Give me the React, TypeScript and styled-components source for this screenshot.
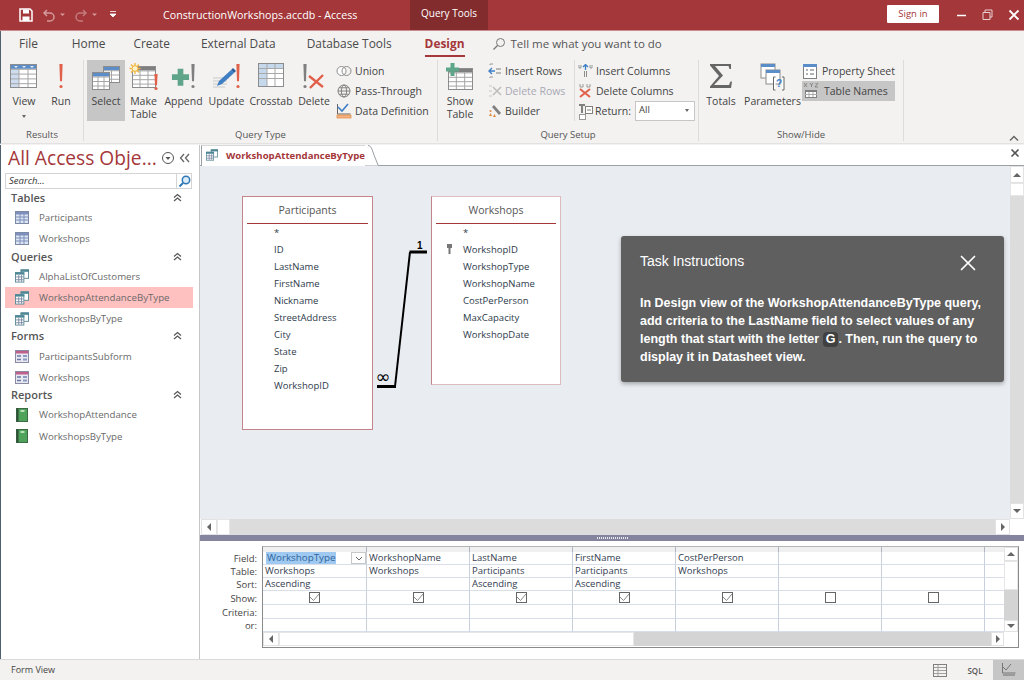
import React from "react";
import styled, { createGlobalStyle } from "styled-components";
import { X } from "lucide-react";

const GlobalStyle = createGlobalStyle`
  html, body {
    margin: 0;
    height: 100%;
    overflow: hidden;
    background: #f3f2f1;
  }
  #root { height: 100%; }
  * { box-sizing: border-box; }
`;

const Window = styled.div`
  width: 1024px;
  height: 680px;
  display: flex;
  flex-direction: column;
  font-family: "Open Sans", "Noto Sans", sans-serif;
  color: #444;
  overflow: hidden;
  background: #f3f2f1;
`;

/* title bar */
const TitleBar = styled.div`
  height: 31px;
  flex: none;
  background: #a4373a;
  border-bottom: 1px solid #c98d8f;
  display: flex;
  align-items: flex-start;
  color: #fff;
`;

const QuickAccess = styled.div`
  width: 163px;
  height: 30px;
  padding: 8px 0 0 19px;
  display: flex;
  align-items: flex-start;
`;

const QuickSlot = styled.span<{ $w: number }>`
  width: ${(p) => p.$w}px;
  flex: none;
  display: block;
  line-height: 0;
`;

const FileName = styled.div`
  width: 247px;
  font-size: 10.7px;
  line-height: 31px;
  white-space: nowrap;
`;

const ToolsTab = styled.div`
  width: 78px;
  height: 30px;
  background: #832c2e;
  font-size: 10px;
  line-height: 27px;
  text-align: center;
`;

const SignIn = styled.div`
  margin: 5px 0 0 399px;
  width: 52px;
  height: 18px;
  background: #fff;
  color: #a4373a;
  font-size: 9.5px;
  line-height: 18px;
  text-align: center;
  border-radius: 1px;
`;

const WindowButtons = styled.div`
  margin-left: 17px;
  padding-top: 9px;
  display: flex;
  gap: 15px;
  line-height: 0;
`;

/* ribbon tabs */
const TabRow = styled.div`
  height: 29px;
  flex: none;
  display: flex;
  align-items: flex-start;
  padding: 3px 0 0 18px;
  border-left: 1px solid #51606f;
`;

const RibbonTab = styled.div<{ $left: number; $active?: boolean }>`
  margin-left: ${(p) => p.$left}px;
  font-size: 11.9px;
  line-height: 19px;
  height: 23px;
  white-space: nowrap;
  color: ${(p) => (p.$active ? "#a4373a" : "#4a4a4a")};
  font-weight: ${(p) => (p.$active ? 700 : 400)};
  border-bottom: ${(p) => (p.$active ? "2px solid #a4373a" : "none")};
`;

const TellMe = styled.div`
  margin-left: 27px;
  display: flex;
  align-items: center;
  gap: 5px;
  font-size: 11.5px;
  line-height: 19px;
  color: #555;
`;

/* ribbon */
const Ribbon = styled.div`
  height: 84px;
  flex: none;
  display: flex;
  position: relative;
  border-left: 1px solid #51606f;
  border-bottom: 1px solid #e2e2e2;
`;

const Group = styled.div<{ $w: number }>`
  width: ${(p) => p.$w}px;
  flex: none;
  height: 81px;
  border-right: 1px solid #dedcdb;
  display: flex;
  flex-direction: column;
`;

const GroupBody = styled.div<{ $pad?: number }>`
  height: 69px;
  display: flex;
  align-items: flex-start;
  padding-left: ${(p) => p.$pad ?? 0}px;
`;

const GroupLabel = styled.div`
  text-align: center;
  font-size: 9.5px;
  line-height: 13px;
  color: #555;
`;

const LargeButton = styled.div<{ $w: number; $on?: boolean }>`
  width: ${(p) => p.$w}px;
  height: 61px;
  flex: none;
  display: flex;
  flex-direction: column;
  align-items: center;
  background: ${(p) => (p.$on ? "#c6c6c6" : "transparent")};
  font-size: 10.5px;
  line-height: 13px;
  text-align: center;
  color: #444;
`;

const IconSlot = styled.div`
  height: 34.5px;
  padding-top: 3px;
  line-height: 0;
  flex: none;
`;

const Caret = styled.span`
  display: block;
  width: 0;
  height: 0;
  margin-top: 7px;
  border-left: 2.5px solid transparent;
  border-right: 2.5px solid transparent;
  border-top: 3px solid #666;
`;

const SmallColumn = styled.div<{ $left?: number; $w?: number; $rule?: boolean }>`
  margin-left: ${(p) => p.$left ?? 0}px;
  width: ${(p) => (p.$w ? `${p.$w}px` : "auto")};
  flex: none;
  padding-top: 1px;
  padding-left: ${(p) => (p.$rule ? 2 : 0)}px;
  border-left: ${(p) => (p.$rule ? "1px solid #dedcdb" : "none")};
  height: 61px;
  display: flex;
  flex-direction: column;
`;

const SmallButton = styled.div<{ $off?: boolean; $on?: boolean; $gap?: number }>`
  height: 20px;
  display: flex;
  align-items: center;
  gap: ${(p) => p.$gap ?? 3}px;
  padding-left: 1px;
  font-size: 10.5px;
  white-space: nowrap;
  color: ${(p) => (p.$off ? "#a9a9b4" : "#444")};
  background: ${(p) => (p.$on ? "#c6c6c6" : "transparent")};
  svg { flex: none; }
`;

const ReturnBox = styled.div`
  width: 60px;
  height: 20px;
  margin-left: 2px;
  background: #fff;
  border: 1px solid #c6c6c6;
  font-size: 9.5px;
  line-height: 15px;
  padding-left: 3px;
  display: flex;
  justify-content: space-between;
  span { margin: 7px 5px 0 0; border-left: 2.5px solid transparent; border-right: 2.5px solid transparent; border-top: 3px solid #666; height: 0; }
`;

const CollapseRibbon = styled.div`
  position: absolute;
  right: 5px;
  bottom: 1px;
  line-height: 0;
`;

/* main */
const Body = styled.div`
  flex: 1;
  min-height: 0;
  display: flex;
  margin-top: 1px;
  border-left: 1px solid #51606f;
`;

const NavPane = styled.div`
  width: 199px;
  flex: none;
  background: #fff;
  border-right: 1px solid #c6c6c6;
  padding: 1px 0 0 3px;
`;

const NavHeader = styled.div`
  height: 26px;
  display: flex;
  align-items: center;
  padding: 0 0 3px 4px;
  color: #a4373a;
  font-size: 19.2px;
  white-space: nowrap;
  svg { flex: none; }
`;

const NavTitle = styled.span`
  width: 153px;
`;

const NavCollapse = styled.svg`
  margin-left: 4px;
`;

const SearchBox = styled.div`
  margin: 1px 0 2px 1px;
  width: 187px;
  height: 16px;
  border: 1px solid #d4d4d4;
  display: flex;
  justify-content: space-between;
  font-size: 9.5px;
  font-style: italic;
  line-height: 13px;
  padding-left: 3px;
  color: #333;
`;

const SearchButton = styled.span`
  width: 15px;
  border-left: 1px solid #d4d4d4;
  line-height: 0;
  padding: 1px 0 0 1px;
`;

const NavHead = styled.div`
  height: 15px;
  margin-bottom: 1px;
  padding: 0 10px 2px 7px;
  width: 188px;
  display: flex;
  justify-content: space-between;
  align-items: center;
  font-size: 11px;
  font-weight: 600;
  color: #555;
`;

const NavItem = styled.div<{ $on?: boolean }>`
  height: 21.3px;
  width: 188px;
  margin-left: 1px;
  display: flex;
  align-items: center;
  gap: 10px;
  padding-left: 10px;
  font-size: 9.7px;
  color: #6a6a6a;
  background: ${(p) => (p.$on ? "#ffc0c0" : "transparent")};
  white-space: nowrap;
  svg { width: 14px; flex: none; }
`;

const Workspace = styled.div`
  flex: 1;
  min-width: 0;
  display: flex;
  flex-direction: column;
  background: #fff;
`;

const DocTabs = styled.div`
  height: 21px;
  flex: none;
  position: relative;
  display: flex;
  align-items: flex-end;
  padding-left: 1px;
  border-bottom: 1px solid #9aa0a6;
`;

const DocTab = styled.div`
  height: 21px;
  width: 164px;
  margin-bottom: -1px;
  background: #fff;
  border-left: 1px solid #9aa0a6;
  border-top: 1px solid #d8d8d8;
  display: flex;
  align-items: center;
  gap: 8px;
  padding: 0 0 2px 4px;
  color: #a4373a;
  font-size: 9.6px;
  font-weight: 700;
  white-space: nowrap;
`;

const DocTabEdge = styled.svg`
  display: block;
  margin-bottom: -1px;
`;

const CloseDoc = styled.div`
  position: absolute;
  right: 4px;
  top: 3px;
  line-height: 0;
`;

const DesignRow = styled.div`
  height: 353px;
  flex: none;
  display: flex;
`;

const Canvas = styled.div`
  width: 810px;
  flex: none;
  position: relative;
  background: #e9edf1;
`;

const TableNode = styled.div<{ $x: number; $w: number; $h: number; $soft?: boolean }>`
  position: absolute;
  left: ${(p) => p.$x}px;
  top: 30px;
  width: ${(p) => p.$w}px;
  height: ${(p) => p.$h}px;
  background: #fff;
  border: 1px solid ${(p) => (p.$soft ? "#dcbcbe" : "#c4858a")};
  border-left-color: #c4858a;
  padding: 0 4px;
`;

const NodeTitle = styled.div`
  height: 27px;
  border-bottom: 1px solid #a4373a;
  text-align: center;
  font-size: 10.5px;
  line-height: 26px;
  color: #555;
`;

const NodeField = styled.div`
  height: 17px;
  position: relative;
  padding-left: 27px;
  font-size: 9.5px;
  line-height: 17px;
  color: #2d3a4a;
  white-space: nowrap;
`;

const KeyMark = styled.svg`
  position: absolute;
  left: 11px;
  top: 3px;
`;

const Relation = styled.svg`
  position: absolute;
  left: 0;
  top: 0;
  pointer-events: none;
`;

const TaskCard = styled.div`
  position: absolute;
  left: 421px;
  top: 70px;
  width: 383px;
  height: 146px;
  background: #5f5f5f;
  border-radius: 3px;
  box-shadow: 0 2px 4px rgba(0, 0, 0, 0.3);
  padding: 16px 18px 0 19px;
  color: #fff;
  font-family: "Liberation Sans", Arial, sans-serif;
`;

const TaskHead = styled.div`
  display: flex;
  justify-content: space-between;
  align-items: flex-start;
  height: 42px;
  font-size: 14px;
  line-height: 18px;
`;

const TaskClose = styled.span`
  line-height: 0;
  margin: -2px 5px 0 0;
`;

const TaskText = styled.div`
  font-size: 12.5px;
  font-weight: 700;
  line-height: 18px;
`;

const LetterKey = styled.span`
  display: inline-block;
  background: #404040;
  border-radius: 4px;
  padding: 0 3px;
  line-height: 15px;
`;

const VScroll = styled.div`
  width: 14px;
  flex: none;
  display: flex;
  flex-direction: column;
  background: #dcdcdc;
`;

const ScrollBtn = styled.div<{ $w?: number; $h?: number }>`
  width: ${(p) => (p.$w ? `${p.$w}px` : "auto")};
  height: ${(p) => (p.$h ? `${p.$h}px` : "auto")};
  flex: none;
  background: #fff;
  border: 1px solid #e2e2e2;
  display: flex;
  align-items: center;
  justify-content: center;
`;

const Thumb = styled.div<{ $w?: number; $h?: number }>`
  width: ${(p) => (p.$w ? `${p.$w}px` : "auto")};
  height: ${(p) => (p.$h ? `${p.$h}px` : "auto")};
  flex: none;
  background: #fff;
  border: 1px solid #e6e6e6;
`;

const Track = styled.div`
  flex: 1;
`;

const HScrollRow = styled.div`
  height: 16px;
  flex: none;
  display: flex;
  padding-left: 1px;
`;

const HScroll = styled.div`
  width: 809px;
  flex: none;
  display: flex;
  background: #dcdcdc;
`;

const Arrow = styled.span<{ $dir: "up" | "down" | "left" | "right" }>`
  width: 0;
  height: 0;
  border-style: solid;
  border-color: transparent;
  ${(p) =>
    p.$dir === "up"
      ? "border-width: 0 4px 4px; border-bottom-color: #666;"
      : p.$dir === "down"
      ? "border-width: 4px 4px 0; border-top-color: #666;"
      : p.$dir === "left"
      ? "border-width: 4px 4px 4px 0; border-right-color: #666;"
      : "border-width: 4px 0 4px 4px; border-left-color: #666;"}
`;

const Splitter = styled.div`
  height: 6px;
  flex: none;
  background: #85849f;
  display: flex;
  justify-content: center;
  padding: 2px 0 0 0;
`;

const SplitDots = styled.div`
  width: 32px;
  height: 2px;
  margin-left: 1px;
  background: repeating-linear-gradient(90deg, #e8e8f0 0 1px, transparent 1px 2px);
`;

const DesignGrid = styled.div`
  flex: 1;
  display: flex;
  align-items: flex-start;
  padding-top: 5px;
`;

const RowLabels = styled.div`
  width: 62px;
  flex: none;
  padding: 6px 5px 0 0;
  text-align: right;
  font-size: 9.5px;
  color: #444;
`;

const RowLabel = styled.div<{ $h: number }>`
  height: ${(p) => p.$h}px;
  line-height: 13px;
`;

const GridFrame = styled.div`
  width: 757px;
  height: 102px;
  flex: none;
  border: 1px solid #8a8a8a;
  border-top-color: #b4b4b4;
  display: flex;
`;

const GridMain = styled.div`
  width: 741px;
  flex: none;
  display: flex;
  flex-direction: column;
`;

const columnTracks = "104px repeat(6, 103px) 1fr";

const GridStrip = styled.div`
  height: 5px;
  background: #f0f0f0;
  display: grid;
  grid-template-columns: ${columnTracks};
`;

const StripCell = styled.div`
  border-right: 1px solid #b0b6c0;
  &:last-child { border-right: none; }
`;

const GridRow = styled.div<{ $h: number }>`
  height: ${(p) => p.$h}px;
  display: grid;
  grid-template-columns: ${columnTracks};
`;

const Cell = styled.div`
  border-right: 1px solid #c8d0dc;
  border-bottom: 1px solid #d8deea;
  font-size: 9.5px;
  line-height: 12px;
  padding: 0 0 1px 2px;
  color: #33404f;
  white-space: nowrap;
  overflow: hidden;
  display: flex;
  align-items: center;
  &:last-child { border-right: none; }
`;

const FieldCell = styled(Cell)`
  justify-content: space-between;
  padding: 0 0 0 3px;
  align-items: stretch;
`;

const Selected = styled.span`
  display: flex;
  align-items: center;
  background: #9fc9f0;
  color: #2f649e;
  font-size: 9.8px;
  padding: 0 1px;
`;

const FieldDrop = styled.span`
  width: 15px;
  border: 1px solid #c8c8c8;
  line-height: 0;
  display: flex;
  align-items: center;
  justify-content: center;
`;

const CheckCell = styled(Cell)`
  justify-content: center;
  padding: 0;
  line-height: 0;
`;

const Tick = styled.span`
  width: 11px;
  height: 11px;
  border: 1px solid #666;
  display: block;
  background: #fff;
`;

const GridHScroll = styled.div`
  height: 14px;
  display: flex;
  background: #d4d4d4;
`;

const GridVScroll = styled.div`
  width: 14px;
  flex: none;
  display: flex;
  flex-direction: column;
  background: #fff;
`;

const GridVTrack = styled.div`
  height: 85px;
  display: flex;
  flex-direction: column;
  background: #d4d4d4;
`;

const StatusBar = styled.div`
  height: 21px;
  flex: none;
  background: #f3f2f1;
  border-top: 1px solid #d9d9d9;
  display: flex;
  align-items: center;
  padding: 0 0 1px 11px;
  font-size: 9px;
  color: #444;
`;

const StatusViews = styled.div`
  margin: 0 0 -1px auto;
  display: flex;
  align-items: stretch;
  height: 20px;
`;

const ViewButton = styled.div<{ $w: number; $on?: boolean }>`
  width: ${(p) => p.$w}px;
  display: flex;
  align-items: center;
  justify-content: center;
  background: ${(p) => (p.$on ? "#c6c6c6" : "transparent")};
  font-size: 8px;
  font-weight: 600;
  color: #555;
`;

/* drawings */
const Sheet = ({ x, y, w, h, cols, rows, head = "#5b8dc8", side }: { x: number; y: number; w: number; h: number; cols: number; rows: number; head?: string; side?: string }) => {
  const hh = h / (rows + 1);
  const cw = w / cols;
  return (
    <g>
      <rect x={x} y={y} width={w} height={h} fill="#fff" />
      {side && <rect x={x} y={y} width={cw} height={h} fill={side} />}
      <rect x={x} y={y} width={w} height={hh} fill={head} />
      {Array.from({ length: rows }, (_, i) => (
        <line key={`r${i}`} x1={x} x2={x + w} y1={y + hh * (i + 1) + 0.5} y2={y + hh * (i + 1) + 0.5} stroke="#a6a6a6" />
      ))}
      {Array.from({ length: cols - 1 }, (_, i) => (
        <line key={`c${i}`} y1={y + hh} y2={y + h} x1={x + cw * (i + 1)} x2={x + cw * (i + 1)} stroke="#a6a6a6" />
      ))}
      <rect x={x + 0.5} y={y + 0.5} width={w - 1} height={h - 1} fill="none" stroke="#8c8c8c" />
    </g>
  );
};

const Bang = ({ x, y, h, color }: { x: number; y: number; h: number; color: string }) => (
  <g fill={color}>
    <path d={`M${x - 1.6} ${y}h3.2l-.6 ${h * 0.72}h-2z`} />
    <circle cx={x} cy={y + h - 1.5} r={1.6} />
  </g>
);

const ViewIcon = () => (
  <svg width="30" height="27" viewBox="0 0 30 27">
    <Sheet x={1} y={1} w={27} h={24} cols={3} rows={4} side="#cddcee" />
    <path d="M5 3h4l-2 2zM13 3h4l-2 2zM21 3h4l-2 2z" fill="#dfe9f5" />
  </svg>
);
const RunIcon = () => (
  <svg width="12" height="27" viewBox="0 0 12 27">
    <Bang x={6} y={1} h={24} color="#e0604a" />
  </svg>
);
const SelectIcon = () => (
  <svg width="30" height="28" viewBox="0 0 30 28">
    <Sheet x={12} y={3} w={17} h={17} cols={2} rows={3} />
    <Sheet x={1} y={9} w={18} h={18} cols={3} rows={3} />
  </svg>
);
const MakeTableIcon = () => (
  <svg width="30" height="28" viewBox="0 0 30 28">
    <Sheet x={3} y={3} w={24} h={22} cols={3} rows={4} head="#7f7f7f" />
    <g stroke="#f0b840" strokeWidth="1.4">
      <path d="M6 0v11M0.5 5.5h11M2 1.5l8 8M10 1.5l-8 8" />
    </g>
    <circle cx={6} cy={5.5} r={2.8} fill="#fff3cf" stroke="#f0b840" />
    <Bang x={27} y={11} h={16} color="#e0604a" />
  </svg>
);
const AppendIcon = () => (
  <svg width="26" height="27" viewBox="0 0 26 27">
    <path d="M7 7h6v6h6v6h-6v6H7v-6H1v-6h6z" transform="translate(0 -1) scale(.95)" fill="#5fa58a" />
    <Bang x={22} y={1} h={24} color="#7f7f7f" />
  </svg>
);
const UpdateIcon = () => (
  <svg width="30" height="28" viewBox="0 0 30 28">
    <path d="M1 15h16M1 18h14M1 21h14M1 24h12" stroke="#c9c9c9" />
    <path d="M5 23l2-5L19 7l3 3-12 11z" fill="#3f7fc4" />
    <path d="M19 7l2-2 3 3-2 2z" fill="#2a5f9e" />
    <Bang x={26} y={1} h={24} color="#e0604a" />
  </svg>
);
const CrosstabIcon = () => (
  <svg width="26" height="24" viewBox="0 0 26 24">
    <rect x={1} y={1} width={24} height={22} fill="#fff" />
    <rect x={1} y={1} width={24} height={4} fill="#c5d8ec" />
    <rect x={1} y={1} width={8} height={22} fill="#c5d8ec" />
    <path d="M1 5.5h24M1 10.5h24M1 15.5h24M9 1v22M17 1v22" stroke="#a8a8a8" />
    <rect x={0.5} y={0.5} width={25} height={23} fill="none" stroke="#8c8c8c" />
  </svg>
);
const DeleteIcon = () => (
  <svg width="28" height="28" viewBox="0 0 28 28">
    <Bang x={5} y={1} h={24} color="#7f7f7f" />
    <path d="M9 13l14 11M23 12L10 25" stroke="#e0604a" strokeWidth="2.4" />
  </svg>
);
const UnionIcon = () => (
  <svg width="16" height="12" viewBox="0 0 16 12">
    <circle cx={5.5} cy={6} r={4.5} fill="#fff" stroke="#8c8c8c" />
    <circle cx={10.5} cy={6} r={4.5} fill="none" stroke="#8c8c8c" />
  </svg>
);
const GlobeIcon = () => (
  <svg width="16" height="14" viewBox="0 0 16 14">
    <g fill="none" stroke="#808080">
      <circle cx={8} cy={7} r={6} />
      <ellipse cx={8} cy={7} rx={2.6} ry={6} />
      <path d="M2 7h12M3 3.8h10M3 10.2h10" />
    </g>
  </svg>
);
const DefinitionIcon = () => (
  <svg width="16" height="16" viewBox="0 0 16 16">
    <path d="M1.5 1v10h13" fill="none" stroke="#666" />
    <path d="M2 4l4 4 6-7" fill="none" stroke="#3f7fc4" strokeWidth="1.6" />
    <rect x={1} y={12} width={14} height={3} fill="#f4b183" stroke="#e08a3c" strokeWidth=".7" />
  </svg>
);
const ShowTableIcon = () => (
  <svg width="28" height="28" viewBox="0 0 28 28">
    <Sheet x={2} y={5} w={25} h={22} cols={3} rows={4} head="#7f7f7f" />
    <path d="M4.5 0h4v4.5H13v4H8.5V13h-4V8.5H0v-4h4.5z" fill="#5fa58a" />
  </svg>
);
const InsertRowsIcon = () => (
  <svg width="14" height="16" viewBox="0 0 14 16">
    <path d="M5 1H2v1M5 14H2v1" stroke="#999" fill="none" />
    <path d="M7 8H1M4 5L1 8l3 3" stroke="#3f7fc4" fill="none" strokeWidth="1.4" />
    <path d="M8 6h5M8 10h5" stroke="#7f7f7f" />
  </svg>
);
const DeleteRowsIcon = () => (
  <svg width="14" height="14" viewBox="0 0 14 14">
    <path d="M1 2h3M1 7h3M1 12h3" stroke="#c8c8c8" />
    <path d="M5 3l8 8M13 3l-8 8" stroke="#bdbdbd" strokeWidth="1.6" />
  </svg>
);
const BuilderIcon = () => (
  <svg width="14" height="14" viewBox="0 0 14 14">
    <path d="M6 1l7 8-2 2L4 3z" fill="#808080" />
    <path d="M1 12l1.5-3L4 12zM5 13l1.5-3L8 13z" fill="#e08a3c" />
    <circle cx={2.5} cy={7} r={1} fill="#e08a3c" />
  </svg>
);
const InsertColumnsIcon = () => (
  <svg width="15" height="14" viewBox="0 0 15 14">
    <path d="M1 1v3h2V1M12 1v3h2V1" stroke="#999" fill="none" />
    <path d="M7.500 6V1M5 3l2.500-2.500L10 3" stroke="#3f7fc4" fill="none" strokeWidth="1.3" />
    <path d="M6 7h1v6H6zM8 7h1v6H8z" fill="#8c8c8c" />
  </svg>
);
const DeleteColumnsIcon = () => (
  <svg width="14" height="14" viewBox="0 0 14 14">
    <path d="M2 0v3h3V0M9 0v3h3V0" stroke="#999" fill="none" />
    <path d="M2 5l10 8M12 5L2 13" stroke="#e0604a" strokeWidth="2" />
  </svg>
);
const ReturnIcon = () => (
  <svg width="15" height="17" viewBox="0 0 15 17">
    <path d="M1 1h6v2H5v7H3V3H1z" fill="#808080" />
    <rect x={7.500} y={3.500} width={7} height={7} fill="#fff" stroke="#808080" />
    <path d="M9 7h4" stroke="#808080" />
    <rect x={1.500} y={11.500} width={6} height={5} fill="#fff" stroke="#999" />
  </svg>
);
const TotalsIcon = () => (
  <svg width="24" height="26" viewBox="0 0 24 26">
    <path d="M1 1h21v5h-1.500l-1-3H6l8 9.500L5 22h15l1.500-3.500H23L22 25H1v-1.500L10 13 1 2.500z" fill="#666" />
  </svg>
);
const ParametersIcon = () => (
  <svg width="26" height="28" viewBox="0 0 26 28">
    <rect x={1} y={1} width={14} height={14} fill="#fff" stroke="#8c8c8c" />
    <rect x={1} y={1} width={14} height={3} fill="#5b8dc8" />
    <rect x={6} y={7} width={14} height={14} fill="#fff" stroke="#8c8c8c" />
    <rect x={6} y={7} width={14} height={3} fill="#5b8dc8" />
    <path d="M15.500 14h-2v13h2M22 14h2v13h-2" fill="#fff" stroke="#666" />
    <text x={16} y={24} fontFamily="Liberation Sans, sans-serif" fontSize="10" fontWeight="700" fill="#3f7fc4">?</text>
  </svg>
);
const PropertyIcon = () => (
  <svg width="14" height="15" viewBox="0 0 14 15">
    <rect x={0.500} y={0.500} width={13} height={14} fill="#fff" stroke="#808080" />
    <rect x={0} y={0} width={14} height={3} fill="#5b8dc8" />
    <path d="M3 6h2M3 10h2M7 6h4M7 10h4" stroke="#666" />
  </svg>
);
const TableNamesIcon = () => (
  <svg width="16" height="16" viewBox="0 0 16 16">
    <path d="M1 0l3 4M4 0L1 4M7 0l1.500 2L10 0M8.500 2v2M12 0h3l-3 4h3" stroke="#777" fill="none" strokeWidth=".8" />
    <rect x={2.500} y={7.500} width={11} height={7} fill="#fff" stroke="#808080" />
    <rect x={2} y={7} width={12} height={2} fill="#808080" />
    <path d="M6 9v5M10 9v5M2 11.500h12" stroke="#aaa" />
  </svg>
);
const TableGlyph = () => (
  <svg width="14" height="13" viewBox="0 0 14 13">
    <rect x={0.500} y={0.500} width={13} height={12} fill="#dde4f2" stroke="#7d8aa5" />
    <rect x={1} y={1} width={12} height={2.500} fill="#7d90bd" />
    <path d="M1 6h12M1 9h12M5 3v9M9 3v9" stroke="#7d90bd" />
  </svg>
);
const QueryGlyph = () => (
  <svg width="14" height="14" viewBox="0 0 15 14">
    <rect x={6.500} y={0.500} width={8} height={9} fill="#fff" stroke="#5d8a94" />
    <rect x={6} y={0} width={9} height={2.500} fill="#4d8694" />
    <rect x={0.500} y={3.500} width={9} height={10} fill="#fff" stroke="#5d8a94" />
    <rect x={0} y={3} width={10} height={2.500} fill="#4d8694" />
    <path d="M1 8h8M1 11h8M4 6v7M7 6v7" stroke="#7d8aa5" />
  </svg>
);
const FormGlyph = () => (
  <svg width="14" height="13" viewBox="0 0 14 13">
    <rect x={0.500} y={0.500} width={13} height={12} fill="#e8e8f2" stroke="#8a8aa5" />
    <rect x={1} y={1} width={12} height={2.500} fill="#c0608a" />
    <path d="M2 6h4M2 9.500h4" stroke="#6a7aa0" strokeWidth="1.500" />
    <rect x={8} y={5} width={4} height={2} fill="#8a9ac0" />
    <rect x={8} y={8.500} width={4} height={2} fill="#8a9ac0" />
  </svg>
);
const ReportGlyph = () => (
  <svg width="14" height="14" viewBox="0 0 13 14">
    <rect x={1} y={0.500} width={11} height={13} fill="#4ea25a" stroke="#3c6a44" />
    <rect x={1} y={0.500} width={2} height={13} fill="#2f4f38" />
    <rect x={5} y={2} width={4} height={2} fill="#b8e0b8" />
  </svg>
);
const Chevrons = () => (
  <svg width="9" height="9" viewBox="0 0 9 9">
    <path d="M1 4.500L4.500 1.500 8 4.500M1 8L4.500 5 8 8" fill="none" stroke="#555" strokeWidth="1.200" />
  </svg>
);
const Glass = () => (
  <svg width="13" height="13" viewBox="0 0 13 13">
    <circle cx={8} cy={5} r={3.700} fill="#dcecf8" stroke="#2f78b8" strokeWidth="1.500" />
    <path d="M5 8l-3.500 3.500" stroke="#2f78b8" strokeWidth="2" />
  </svg>
);

const tables = ["Participants", "Workshops"];
const queries = ["AlphaListOfCustomers", "WorkshopAttendanceByType", "WorkshopsByType"];
const forms = ["ParticipantsSubform", "Workshops"];
const reports = ["WorkshopAttendance", "WorkshopsByType"];
const participantFields = ["ID", "LastName", "FirstName", "Nickname", "StreetAddress", "City", "State", "Zip", "WorkshopID"];
const workshopFields = ["WorkshopID", "WorkshopType", "WorkshopName", "CostPerPerson", "MaxCapacity", "WorkshopDate"];

const columns = [
  { field: "WorkshopType", table: "Workshops", sort: "Ascending", show: true },
  { field: "WorkshopName", table: "Workshops", sort: "", show: true },
  { field: "LastName", table: "Participants", sort: "Ascending", show: true },
  { field: "FirstName", table: "Participants", sort: "Ascending", show: true },
  { field: "CostPerPerson", table: "Workshops", sort: "", show: true },
  { field: "", table: "", sort: "", show: false },
  { field: "", table: "", sort: "", show: false },
];

const CheckMark = () => (
  <svg width="9" height="9" viewBox="0 0 9 9">
    <path d="M0 4l3.500 3.500L9 1" fill="none" stroke="#888" strokeWidth="1" />
  </svg>
);

function NavSection({ title, items, glyph, active }: { title: string; items: string[]; glyph: React.ReactNode; active?: string }) {
  return (
    <>
      <NavHead>
        {title}
        <Chevrons />
      </NavHead>
      {items.map((name) => (
        <NavItem key={name} $on={name === active}>
          {glyph}
          {name}
        </NavItem>
      ))}
    </>
  );
}

function App() {
  return (
    <Window>
      <GlobalStyle />
      <TitleBar>
        <QuickAccess>
          <QuickSlot $w={23}>
            <svg width="14" height="14" viewBox="0 0 14 14">
              <path d="M1 1h10l2 2v10H1z" fill="none" stroke="#fff" strokeWidth="1.500" />
              <path d="M4 1.500h6v4H4zM3.500 8.500h7V13h-7z" fill="#fff" />
            </svg>
          </QuickSlot>
          <QuickSlot $w={32}>
            <svg width="24" height="14" viewBox="0 0 24 14">
              <path d="M5 2L2 5l3 3M2 5h6a4 4 0 0 1 0 8H5" fill="none" stroke="#d49a9c" strokeWidth="1.500" />
              <path d="M18 5.500h5l-2.500 2.500z" fill="#d49a9c" />
            </svg>
          </QuickSlot>
          <QuickSlot $w={36}>
            <svg width="24" height="14" viewBox="0 0 24 14">
              <path d="M9 2l3 3-3 3M12 5H6a4 4 0 0 0 0 8h3" fill="none" stroke="#c47a7d" strokeWidth="1.500" />
              <path d="M18 5.500h5l-2.500 2.500z" fill="#d49a9c" />
            </svg>
          </QuickSlot>
          <QuickSlot $w={10}>
            <svg width="6" height="12" viewBox="0 0 6 12">
              <path d="M0 3.500h6M0 6l3 3 3-3z" stroke="#fff" strokeWidth=".8" fill="#fff" />
            </svg>
          </QuickSlot>
        </QuickAccess>
        <FileName>ConstructionWorkshops.accdb - Access</FileName>
        <ToolsTab>Query Tools</ToolsTab>
        <SignIn>Sign in</SignIn>
        <WindowButtons>
          <svg width="11" height="12" viewBox="0 0 11 12">
            <path d="M1 6.500h9" stroke="#fff" strokeWidth="1.500" />
          </svg>
          <svg width="11" height="12" viewBox="0 0 11 12">
            <path d="M3 3V1h7v7H8M1 3.500h7v7H1z" fill="none" stroke="#e8cfd0" />
          </svg>
          <svg width="12" height="12" viewBox="0 0 12 12">
            <path d="M1.500 1.500l9 9M10.500 1.500l-9 9" stroke="#fff" strokeWidth="1.800" />
          </svg>
        </WindowButtons>
      </TitleBar>

      <TabRow>
        <RibbonTab $left={0}>File</RibbonTab>
        <RibbonTab $left={34}>Home</RibbonTab>
        <RibbonTab $left={28}>Create</RibbonTab>
        <RibbonTab $left={31}>External Data</RibbonTab>
        <RibbonTab $left={31}>Database Tools</RibbonTab>
        <RibbonTab $left={33} $active>Design</RibbonTab>
        <TellMe>
          <svg width="14" height="14" viewBox="0 0 14 14">
            <circle cx={8.500} cy={5.500} r={4} fill="none" stroke="#777" />
            <path d="M5.500 8.500L1.500 12.500" stroke="#777" strokeWidth="1.300" />
          </svg>
          Tell me what you want to do
        </TellMe>
      </TabRow>

      <Ribbon>
        <Group $w={83}>
          <GroupBody>
            <LargeButton $w={46}>
              <IconSlot><ViewIcon /></IconSlot>
              View
              <Caret />
            </LargeButton>
            <LargeButton $w={28}>
              <IconSlot><RunIcon /></IconSlot>
              Run
            </LargeButton>
          </GroupBody>
          <GroupLabel>Results</GroupLabel>
        </Group>
        <Group $w={354}>
          <GroupBody $pad={3}>
            <LargeButton $w={38} $on>
              <IconSlot><SelectIcon /></IconSlot>
              Select
            </LargeButton>
            <LargeButton $w={37}>
              <IconSlot><MakeTableIcon /></IconSlot>
              Make Table
            </LargeButton>
            <LargeButton $w={43}>
              <IconSlot><AppendIcon /></IconSlot>
              Append
            </LargeButton>
            <LargeButton $w={43}>
              <IconSlot><UpdateIcon /></IconSlot>
              Update
            </LargeButton>
            <LargeButton $w={46}>
              <IconSlot><CrosstabIcon /></IconSlot>
              Crosstab
            </LargeButton>
            <LargeButton $w={40}>
              <IconSlot><DeleteIcon /></IconSlot>
              Delete
            </LargeButton>
            <SmallColumn $left={1}>
              <SmallButton><UnionIcon />Union</SmallButton>
              <SmallButton><GlobeIcon />Pass-Through</SmallButton>
              <SmallButton><DefinitionIcon />Data Definition</SmallButton>
            </SmallColumn>
          </GroupBody>
          <GroupLabel>Query Type</GroupLabel>
        </Group>
        <Group $w={261}>
          <GroupBody>
            <LargeButton $w={44}>
              <IconSlot><ShowTableIcon /></IconSlot>
              Show Table
            </LargeButton>
            <SmallColumn $left={5} $w={87}>
              <SmallButton><InsertRowsIcon />Insert Rows</SmallButton>
              <SmallButton $off><DeleteRowsIcon />Delete Rows</SmallButton>
              <SmallButton><BuilderIcon />Builder</SmallButton>
            </SmallColumn>
            <SmallColumn $rule>
              <SmallButton><InsertColumnsIcon />Insert Columns</SmallButton>
              <SmallButton $gap={4}><DeleteColumnsIcon />Delete Columns</SmallButton>
              <SmallButton $gap={2}>
                <ReturnIcon />Return:
                <ReturnBox>All<span /></ReturnBox>
              </SmallButton>
            </SmallColumn>
          </GroupBody>
          <GroupLabel>Query Setup</GroupLabel>
        </Group>
        <Group $w={205}>
          <GroupBody>
            <LargeButton $w={44}>
              <IconSlot><TotalsIcon /></IconSlot>
              Totals
            </LargeButton>
            <LargeButton $w={59}>
              <IconSlot><ParametersIcon /></IconSlot>
              Parameters
            </LargeButton>
            <SmallColumn>
              <SmallButton $gap={5}><PropertyIcon />Property Sheet</SmallButton>
              <SmallButton $on $gap={5}><TableNamesIcon />Table Names</SmallButton>
            </SmallColumn>
          </GroupBody>
          <GroupLabel>Show/Hide</GroupLabel>
        </Group>
        <CollapseRibbon>
          <svg width="10" height="7" viewBox="0 0 10 7">
            <path d="M1 5.500L5 1.500l4 4" fill="none" stroke="#666" strokeWidth="1.500" />
          </svg>
        </CollapseRibbon>
      </Ribbon>

      <Body>
        <NavPane>
          <NavHeader>
            <NavTitle>All Access Obje...</NavTitle>
            <svg width="14" height="14" viewBox="0 0 14 14">
              <circle cx={7} cy={7} r={5.500} fill="none" stroke="#555" />
              <path d="M4.500 6h5L7 9z" fill="#555" />
            </svg>
            <NavCollapse width="12" height="10" viewBox="0 0 12 10">
              <path d="M5 1L1.500 5 5 9M10 1L6.500 5 10 9" fill="none" stroke="#666" strokeWidth="1.300" />
            </NavCollapse>
          </NavHeader>
          <SearchBox>
            Search...
            <SearchButton><Glass /></SearchButton>
          </SearchBox>
          <NavSection title="Tables" items={tables} glyph={<TableGlyph />} />
          <NavSection title="Queries" items={queries} glyph={<QueryGlyph />} active="WorkshopAttendanceByType" />
          <NavSection title="Forms" items={forms} glyph={<FormGlyph />} />
          <NavSection title="Reports" items={reports} glyph={<ReportGlyph />} />
        </NavPane>

        <Workspace>
          <DocTabs>
            <DocTab>
              <QueryGlyph />
              WorkshopAttendanceByType
            </DocTab>
            <DocTabEdge width="14" height="21" viewBox="0 0 14 21">
              <path d="M0 0.500h3C6 0.500 7 4 9 10l4 10.500H0z" fill="#fff" />
              <path d="M3 0.500C6 0.500 7 4 9 10l4 10" fill="none" stroke="#9aa0a6" />
            </DocTabEdge>
            <CloseDoc>
              <svg width="10" height="10" viewBox="0 0 10 10">
                <path d="M1.500 1.500l7 7M8.500 1.500l-7 7" stroke="#555" strokeWidth="1.600" />
              </svg>
            </CloseDoc>
          </DocTabs>

          <DesignRow>
            <Canvas>
              <TableNode $x={42} $w={131} $h={234}>
                <NodeTitle>Participants</NodeTitle>
                <NodeField>*</NodeField>
                {participantFields.map((f) => (
                  <NodeField key={f}>{f}</NodeField>
                ))}
              </TableNode>
              <TableNode $x={231} $w={130} $h={189} $soft>
                <NodeTitle>Workshops</NodeTitle>
                <NodeField>*</NodeField>
                {workshopFields.map((f, i) => (
                  <NodeField key={f}>
                    {i === 0 && (
                      <KeyMark width="5" height="10" viewBox="0 0 5 10">
                        <path d="M0 0h5v4H3.500v6h-2V4H0z" fill="#777" />
                      </KeyMark>
                    )}
                    {f}
                  </NodeField>
                ))}
              </TableNode>
              <Relation width="810" height="353" viewBox="0 0 810 353">
                <path d="M195 220.500L210 86" fill="none" stroke="#000" strokeWidth="2" />
                <path d="M177 220.500h19M209.500 86h17.500" fill="none" stroke="#000" strokeWidth="3" />
                <text x={217} y={83} fontFamily="Liberation Sans, sans-serif" fontSize="10" fontWeight="700" fill="#000">1</text>
                <text x={175.500} y={217} fontFamily="DejaVu Sans, sans-serif" fontSize="18" fill="#000">∞</text>
              </Relation>
              <TaskCard>
                <TaskHead>
                  Task Instructions
                  <TaskClose><X size={26} strokeWidth={1.600} color="#fff" /></TaskClose>
                </TaskHead>
                <TaskText>
                  In Design view of the WorkshopAttendanceByType query, add criteria to the LastName field to select values of any length that start with the letter <LetterKey>G</LetterKey>. Then, run the query to display it in Datasheet view.
                </TaskText>
              </TaskCard>
            </Canvas>
            <VScroll>
              <ScrollBtn $h={17}><Arrow $dir="up" /></ScrollBtn>
              <Thumb $h={13} />
              <Track />
              <ScrollBtn $h={16}><Arrow $dir="down" /></ScrollBtn>
            </VScroll>
          </DesignRow>

          <HScrollRow>
            <HScroll>
              <ScrollBtn $w={16}><Arrow $dir="left" /></ScrollBtn>
              <Thumb $w={13} />
              <Track />
              <ScrollBtn $w={15}><Arrow $dir="right" /></ScrollBtn>
            </HScroll>
          </HScrollRow>

          <Splitter><SplitDots /></Splitter>

          <DesignGrid>
            <RowLabels>
              <RowLabel $h={13}>Field:</RowLabel>
              <RowLabel $h={13}>Table:</RowLabel>
              <RowLabel $h={14}>Sort:</RowLabel>
              <RowLabel $h={14}>Show:</RowLabel>
              <RowLabel $h={13}>Criteria:</RowLabel>
              <RowLabel $h={13}>or:</RowLabel>
            </RowLabels>
            <GridFrame>
              <GridMain>
                <GridStrip>
                  {columns.map((_, i) => <StripCell key={i} />)}
                  <StripCell />
                </GridStrip>
                <GridRow $h={13}>
                  {columns.map((c, i) =>
                    i === 0 ? (
                      <FieldCell key={i}>
                        <Selected>{c.field}</Selected>
                        <FieldDrop>
                          <svg width="8" height="5" viewBox="0 0 8 5">
                            <path d="M1 1l3 3 3-3" fill="none" stroke="#666" />
                          </svg>
                        </FieldDrop>
                      </FieldCell>
                    ) : (
                      <Cell key={i}>{c.field}</Cell>
                    )
                  )}
                  <Cell />
                </GridRow>
                <GridRow $h={13}>
                  {columns.map((c, i) => <Cell key={i}>{c.table}</Cell>)}
                  <Cell />
                </GridRow>
                <GridRow $h={13}>
                  {columns.map((c, i) => <Cell key={i}>{c.sort}</Cell>)}
                  <Cell />
                </GridRow>
                <GridRow $h={14}>
                  {columns.map((c, i) => (
                    <CheckCell key={i}>
                      <Tick>{c.show && <CheckMark />}</Tick>
                    </CheckCell>
                  ))}
                  <Cell />
                </GridRow>
                <GridRow $h={14}>
                  {columns.map((_, i) => <Cell key={i} />)}
                  <Cell />
                </GridRow>
                <GridRow $h={13}>
                  {columns.map((_, i) => <Cell key={i} />)}
                  <Cell />
                </GridRow>
                <GridHScroll>
                  <ScrollBtn $w={16}><Arrow $dir="left" /></ScrollBtn>
                  <Thumb $w={355} />
                  <Track />
                  <ScrollBtn $w={13}><Arrow $dir="right" /></ScrollBtn>
                </GridHScroll>
              </GridMain>
              <GridVScroll>
                <GridVTrack>
                  <ScrollBtn $h={14}><Arrow $dir="up" /></ScrollBtn>
                  <Thumb $h={29} />
                  <Track />
                  <ScrollBtn $h={12}><Arrow $dir="down" /></ScrollBtn>
                </GridVTrack>
              </GridVScroll>
            </GridFrame>
          </DesignGrid>
        </Workspace>
      </Body>

      <StatusBar>
        Form View
        <StatusViews>
          <ViewButton $w={34}>
            <svg width="14" height="13" viewBox="0 0 14 13">
              <rect x={0.500} y={0.500} width={13} height={12} fill="none" stroke="#808080" />
              <path d="M1 3.500h12M1 6.500h12M1 9.500h12M5 1v11" stroke="#a0a0a0" />
            </svg>
          </ViewButton>
          <ViewButton $w={36}>SQL</ViewButton>
          <ViewButton $w={31} $on>
            <svg width="15" height="14" viewBox="0 0 15 14">
              <path d="M1.500 0v10h13" fill="none" stroke="#777" />
              <path d="M2 4l3 3 5-6" fill="none" stroke="#777" />
              <path d="M2 11h12v2H2z" fill="#9a9a9a" />
            </svg>
          </ViewButton>
        </StatusViews>
      </StatusBar>
    </Window>
  );
}

export default App;
